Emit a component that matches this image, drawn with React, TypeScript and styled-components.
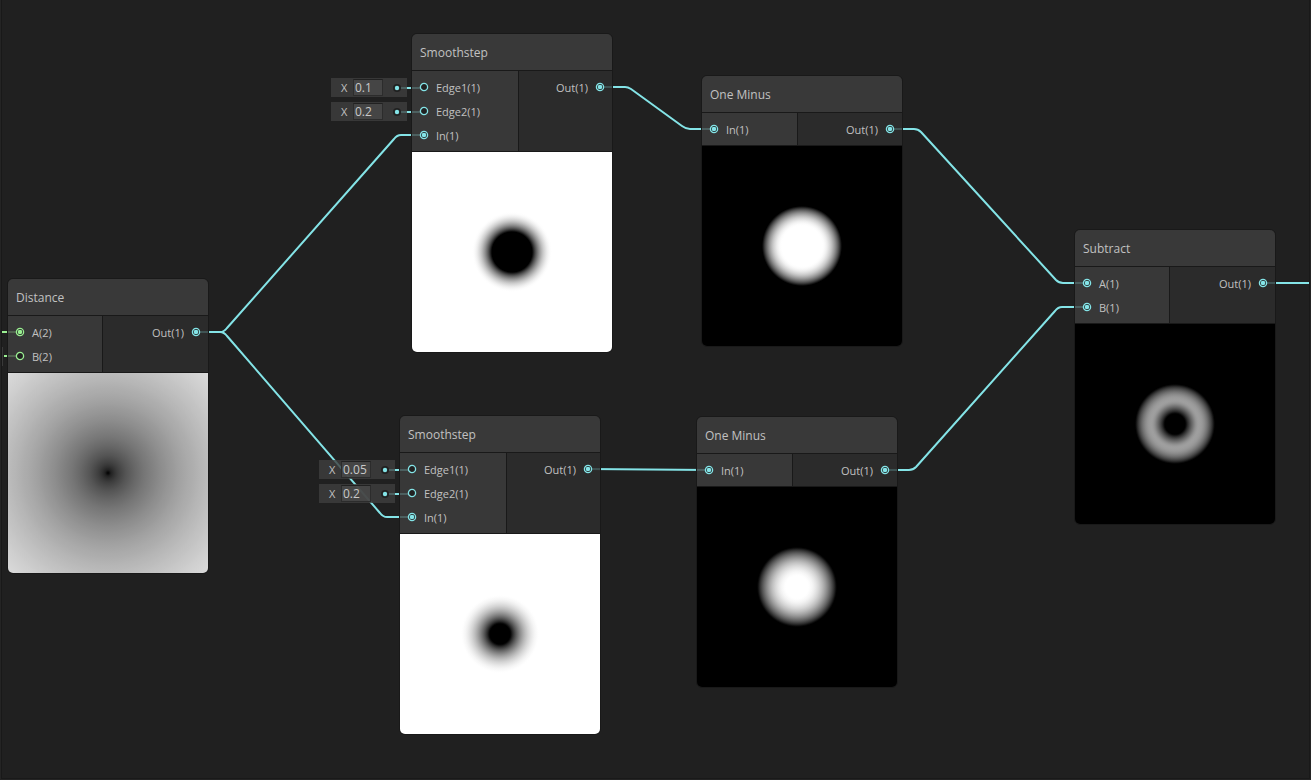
import React from "react";
import styled, { createGlobalStyle } from "styled-components";

const CYAN = "#84e4e7";
const GREEN = "#9aef92";
const LINE = "#191919";

const GlobalStyle = createGlobalStyle`
  *, *::before, *::after { box-sizing: border-box; }
  html, body, #root { height: 100%; }
  #root { padding: 0 1px 1px; }
  body {
    margin: 0;
    background: #242424;
    color: #c1c1c1;
    font-family: "Open Sans", "Noto Sans", sans-serif;
    font-size: 11px;
  }
`;

const Canvas = styled.main`
  position: relative;
  min-height: 100%;
  overflow: hidden;
  background: #202020;
  border: 1px solid ${LINE};
  border-top: 0;
`;

const Wires = styled.svg`
  position: absolute;
  top: 0;
  left: -2px;
  width: 100%;
  height: 100%;
  overflow: visible;
  fill: none;
  stroke-width: 2;
  stroke-linejoin: round;
`;

const NodeCard = styled.article<{ $x: number; $y: number }>`
  position: absolute;
  left: ${(p) => p.$x - 3}px;
  top: ${(p) => p.$y - 1}px;
  width: 202px;
  border: 1px solid ${LINE};
  border-radius: 6px;
`;

const Title = styled.h2`
  margin: 0;
  height: 37px;
  padding: 1px 8px 0;
  border-bottom: 1px solid ${LINE};
  border-radius: 5px 5px 0 0;
  background: #393939;
  font-size: 12px;
  font-weight: 400;
  line-height: 36px;
`;

const Ports = styled.div`
  display: flex;
  border-bottom: 1px solid ${LINE};
`;

const Inputs = styled.ul<{ $width: number }>`
  flex: none;
  width: ${(p) => p.$width}px;
  margin: 0;
  padding: 4px 8px;
  list-style: none;
  background: rgba(63, 63, 63, 0.8);
`;

const Outputs = styled.ul`
  flex: 1;
  margin: 0;
  padding: 4px 8px;
  list-style: none;
  border-left: 1px solid ${LINE};
  background: rgba(46, 46, 46, 0.8);
`;

const Port = styled.li<{ $out?: boolean }>`
  display: flex;
  flex-direction: ${(p) => (p.$out ? "row-reverse" : "row")};
  align-items: center;
  gap: 8px;
  height: 24px;
  line-height: 24px;
`;

const PortLabel = styled.span`
  padding-top: 2px;
`;

const Socket = styled.svg`
  flex: none;
  width: 8px;
  height: 8px;
  overflow: visible;
`;

const Preview = styled.div<{ $fill: string }>`
  height: 200px;
  border-radius: 0 0 5px 5px;
  background: ${(p) => p.$fill};
`;

const Slot = styled.label<{ $x: number; $y: number }>`
  position: absolute;
  left: ${(p) => p.$x - 2}px;
  top: ${(p) => p.$y}px;
  display: flex;
  align-items: center;
  width: 76px;
  height: 19px;
  padding: 0 6px 0 10px;
  background: rgba(63, 63, 63, 0.8);
`;

const Axis = styled.span`
  width: 12px;
  line-height: 19px;
`;

const SlotInput = styled.input`
  width: 30px;
  height: 17px;
  margin: 0 auto 0 0;
  padding: 0 0 1px 1px;
  border: 1px solid #2c2c2c;
  border-top-color: #212121;
  background: rgba(72, 72, 72, 0.8);
  color: #c9c9c9;
  font: inherit;
  font-size: 12px;
  line-height: 14px;
`;

type SocketProps = { color?: string; connected?: boolean };

const PortSocket = ({ color = CYAN, connected }: SocketProps) => (
  <Socket viewBox="0 0 8 8" aria-hidden="true">
    <circle cx="4" cy="4" r="3.6" fill="#212121" stroke={color} strokeWidth="1.3" />
    {connected && <circle cx="4" cy="4" r="2.3" fill={color} />}
  </Socket>
);

const SlotSocket = () => (
  <Socket viewBox="0 0 8 8" aria-hidden="true">
    <circle cx="4" cy="4" r="4" fill="#212121" />
    <circle cx="4" cy="4" r="2.2" fill={CYAN} />
  </Socket>
);

/** Builds a greyscale radial gradient from a value function of the pixel radius. */
const radial = (value: (r: number) => number, max: number) => {
  const steps = Array.from({ length: 49 }, (_, i) => {
    const r = (max * i) / 48;
    const linear = Math.min(1, Math.max(0, value(r / 200)));
    const srgb = linear <= 0.0031308 ? linear * 12.92 : 1.055 * linear ** (1 / 2.4) - 0.055;
    const c = Math.round(srgb * 255);
    return `rgb(${c},${c},${c}) ${r.toFixed(1)}px`;
  });
  return `radial-gradient(circle at center, ${steps.join(", ")})`;
};

const smoothstep = (a: number, b: number, v: number) => {
  const t = Math.min(1, Math.max(0, (v - a) / (b - a)));
  return t * t * (3 - 2 * t);
};

const previews = {
  distance: radial((d) => d, 144),
  wide: radial((d) => smoothstep(0.1, 0.2, d), 48),
  narrow: radial((d) => smoothstep(0.05, 0.2, d), 48),
  wideInverse: radial((d) => 1 - smoothstep(0.1, 0.2, d), 48),
  narrowInverse: radial((d) => 1 - smoothstep(0.05, 0.2, d), 48),
  ring: radial((d) => smoothstep(0.05, 0.2, d) - smoothstep(0.1, 0.2, d), 48),
};

type InputPort = { label: string; connected: boolean; color?: string };
type GraphNode = {
  id: string;
  title: string;
  x: number;
  y: number;
  inputWidth: number;
  inputs: InputPort[];
  preview: string;
};

const stepInputs: InputPort[] = [
  { label: "Edge1(1)", connected: false },
  { label: "Edge2(1)", connected: false },
  { label: "In(1)", connected: true },
];

const nodes: GraphNode[] = [
  {
    id: "distance", title: "Distance", x: 8, y: 279, inputWidth: 94, preview: previews.distance,
    inputs: [
      { label: "A(2)", connected: true, color: GREEN },
      { label: "B(2)", connected: false, color: GREEN },
    ],
  },
  { id: "step-a", title: "Smoothstep", x: 412, y: 34, inputWidth: 106, inputs: stepInputs, preview: previews.wide },
  { id: "step-b", title: "Smoothstep", x: 400, y: 416, inputWidth: 106, inputs: stepInputs, preview: previews.narrow },
  {
    id: "minus-a", title: "One Minus", x: 702, y: 76, inputWidth: 95, preview: previews.wideInverse,
    inputs: [{ label: "In(1)", connected: true }],
  },
  {
    id: "minus-b", title: "One Minus", x: 697, y: 417, inputWidth: 95, preview: previews.narrowInverse,
    inputs: [{ label: "In(1)", connected: true }],
  },
  {
    id: "subtract", title: "Subtract", x: 1075, y: 230, inputWidth: 94, preview: previews.ring,
    inputs: [
      { label: "A(1)", connected: true },
      { label: "B(1)", connected: true },
    ],
  },
];

const slots = [
  { id: "a1", x: 331, y: 78, value: "0.1" },
  { id: "a2", x: 331, y: 102, value: "0.2" },
  { id: "b1", x: 319, y: 460, value: "0.05" },
  { id: "b2", x: 319, y: 484, value: "0.2" },
];

const wires = [
  "M196 332H220Q224 332 227 328L394 139Q397 135 401 135H424",
  "M196 332H220Q224 332 227 336L380 513Q383 517 387 517H412",
  "M600 87H625Q628 87 631 89L682 126Q686 129 690 129H714",
  "M890 129H914Q918 129 921 132L1056 280Q1059 283 1063 283H1087",
  "M588 469L709 470",
  "M885 470H909Q913 470 916 467L1055 311Q1058 307 1062 307H1087",
  "M1263 283H1311",
  "M397 88H424",
  "M397 112H424",
  "M385 470H412",
  "M385 494H412",
];

const greenWires = ["M2 332H20", "M4 356H20"];

export default function App() {
  return (
    <>
      <GlobalStyle />
      <Canvas>
        <Wires aria-hidden="true">
          <path d="M2.5 347V366" stroke="#393939" strokeWidth="1" />
          <g stroke={CYAN}>{wires.map((d) => <path key={d} d={d} />)}</g>
          <g stroke={GREEN}>{greenWires.map((d) => <path key={d} d={d} />)}</g>
        </Wires>
        {slots.map((s) => (
          <Slot key={s.id} $x={s.x} $y={s.y}>
            <Axis>X</Axis>
            <SlotInput defaultValue={s.value} />
            <SlotSocket />
          </Slot>
        ))}
        {nodes.map((n) => (
          <NodeCard key={n.id} $x={n.x} $y={n.y}>
            <Title>{n.title}</Title>
            <Ports>
              <Inputs $width={n.inputWidth}>
                {n.inputs.map((p) => (
                  <Port key={p.label}>
                    <PortSocket color={p.color} connected={p.connected} />
                    <PortLabel>{p.label}</PortLabel>
                  </Port>
                ))}
              </Inputs>
              <Outputs>
                <Port $out>
                  <PortSocket connected />
                  <PortLabel>Out(1)</PortLabel>
                </Port>
              </Outputs>
            </Ports>
            <Preview $fill={n.preview} />
          </NodeCard>
        ))}
      </Canvas>
    </>
  );
}
